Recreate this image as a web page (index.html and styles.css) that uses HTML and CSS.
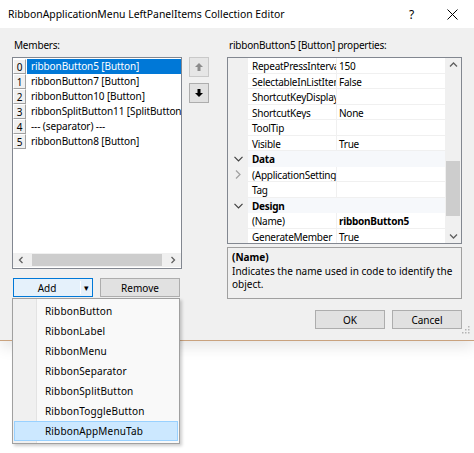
FILE: index.html
```html
<!DOCTYPE html>
<html lang="en">
<head>
    <meta charset="UTF-8">
    <title>RibbonApplicationMenu LeftPanelItems Collection Editor</title>
    <link rel="stylesheet" href="styles.css">
</head>
<body>
    <div class="dialog">
        <div class="titlebar">
            <span class="title">RibbonApplicationMenu LeftPanelItems Collection Editor</span>
            <span class="help">?</span>
            <svg class="close" width="11" height="11" viewBox="0 0 11 11"><path d="M0.5 0.5 L10.5 10.5 M10.5 0.5 L0.5 10.5" stroke="#000" stroke-width="1"/></svg>
        </div>

        <div class="content">
            <div class="left">
                <div class="label">Members:</div>
                <div class="members-row">
                    <div class="members">
                        <div class="items">
                            <div class="item selected"><span class="idx">0</span><span class="name">ribbonButton5 [Button]</span></div>
                            <div class="item"><span class="idx">1</span><span class="name">ribbonButton7 [Button]</span></div>
                            <div class="item"><span class="idx">2</span><span class="name">ribbonButton10 [Button]</span></div>
                            <div class="item"><span class="idx">3</span><span class="name">ribbonSplitButton11 [SplitButton]</span></div>
                            <div class="item"><span class="idx">4</span><span class="name">--- (separator) ---</span></div>
                            <div class="item"><span class="idx">5</span><span class="name">ribbonButton8 [Button]</span></div>
                        </div>
                        <div class="hscroll">
                            <svg width="16" height="14" viewBox="0 0 16 14"><path d="M9.5 4 L6.5 7 L9.5 10" fill="none" stroke="#606060" stroke-width="1.3"/></svg>
                            <div class="hthumb"></div>
                            <svg width="16" height="14" viewBox="0 0 16 14"><path d="M6.5 4 L9.5 7 L6.5 10" fill="none" stroke="#606060" stroke-width="1.3"/></svg>
                        </div>
                    </div>
                    <div class="movers">
                        <div class="mover disabled">
                            <svg width="10" height="10" viewBox="0 0 10 10"><path d="M5 1 L9 5 L6.5 5 L6.5 9 L3.5 9 L3.5 5 L1 5 Z" fill="#8c8c8c"/></svg>
                        </div>
                        <div class="mover">
                            <svg width="10" height="10" viewBox="0 0 10 10"><path d="M5 9 L9 5 L6.5 5 L6.5 1 L3.5 1 L3.5 5 L1 5 Z" fill="#000"/></svg>
                        </div>
                    </div>
                </div>
                <div class="add-row">
                    <div class="btn add"><span class="add-text">Add</span><span class="add-split"></span><span class="add-arrow">&#9662;</span></div>
                    <div class="btn remove">Remove</div>
                </div>
            </div>

            <div class="right">
                <div class="label">ribbonButton5 [Button] properties:</div>
                <div class="grid">
                    <div class="rows">
                        <div class="row"><span class="gut"></span><span class="pname">RepeatPressInterval</span><span class="pval">150</span></div>
                        <div class="row"><span class="gut"></span><span class="pname">SelectableInListItems</span><span class="pval">False</span></div>
                        <div class="row"><span class="gut"></span><span class="pname">ShortcutKeyDisplayString</span><span class="pval"></span></div>
                        <div class="row"><span class="gut"></span><span class="pname">ShortcutKeys</span><span class="pval">None</span></div>
                        <div class="row"><span class="gut"></span><span class="pname">ToolTip</span><span class="pval"></span></div>
                        <div class="row"><span class="gut"></span><span class="pname">Visible</span><span class="pval">True</span></div>
                        <div class="row cat"><span class="gut"><svg width="9" height="6" viewBox="0 0 9 6"><path d="M0.5 0.8 L4.5 4.8 L8.5 0.8" fill="none" stroke="#404040" stroke-width="1.2"/></svg></span><span class="cname">Data</span></div>
                        <div class="row"><span class="gut"><svg width="6" height="9" viewBox="0 0 6 9"><path d="M1 0.5 L5 4.5 L1 8.5" fill="none" stroke="#a0a0a0" stroke-width="1.2"/></svg></span><span class="pname">(ApplicationSettings)</span><span class="pval"></span></div>
                        <div class="row"><span class="gut"></span><span class="pname">Tag</span><span class="pval"></span></div>
                        <div class="row cat"><span class="gut"><svg width="9" height="6" viewBox="0 0 9 6"><path d="M0.5 0.8 L4.5 4.8 L8.5 0.8" fill="none" stroke="#404040" stroke-width="1.2"/></svg></span><span class="cname">Design</span></div>
                        <div class="row"><span class="gut"></span><span class="pname">(Name)</span><span class="pval bold">ribbonButton5</span></div>
                        <div class="row"><span class="gut"></span><span class="pname">GenerateMember</span><span class="pval">True</span></div>
                    </div>
                    <div class="vscroll">
                        <svg width="15" height="14" viewBox="0 0 15 14"><path d="M4 8.5 L7.5 5 L11 8.5" fill="none" stroke="#606060" stroke-width="1.3"/></svg>
                        <div class="vtrack"><div class="vthumb"></div></div>
                        <svg width="15" height="14" viewBox="0 0 15 14"><path d="M4 5.5 L7.5 9 L11 5.5" fill="none" stroke="#606060" stroke-width="1.3"/></svg>
                    </div>
                </div>
                <div class="desc">
                    <div class="desc-title">(Name)</div>
                    <div class="desc-text">Indicates the name used in code to identify the object.</div>
                </div>
                <div class="footer">
                    <div class="btn">OK</div>
                    <div class="btn">Cancel</div>
                </div>
            </div>
        </div>
        <div class="grip">
            <svg width="8" height="8" viewBox="0 0 8 8" fill="#b4b4b4"><rect x="6" y="0" width="1.5" height="1.5"/><rect x="3" y="3" width="1.5" height="1.5"/><rect x="6" y="3" width="1.5" height="1.5"/><rect x="0" y="6" width="1.5" height="1.5"/><rect x="3" y="6" width="1.5" height="1.5"/><rect x="6" y="6" width="1.5" height="1.5"/></svg>
        </div>
    </div>

    <div class="menu">
        <div class="menu-item">RibbonButton</div>
        <div class="menu-item">RibbonLabel</div>
        <div class="menu-item">RibbonMenu</div>
        <div class="menu-item">RibbonSeparator</div>
        <div class="menu-item">RibbonSplitButton</div>
        <div class="menu-item">RibbonToggleButton</div>
        <div class="menu-item hover">RibbonAppMenuTab</div>
    </div>
</body>
</html>
```

FILE: styles.css
```css
body {
    margin: 0;
    width: 474px;
    height: 453px;
    overflow: hidden;
    background-color: #ffffff;
    font-family: "Noto Sans", "Open Sans", sans-serif;
    font-size: 10px;
    color: #000;
    position: relative;
}
.dialog {
    height: 340px;
    background-color: #f0f0f0;
    border-bottom: 1px solid #c9a27e;
    box-shadow: 0 6px 14px rgba(0, 0, 0, 0.1);
    position: relative;
}
.titlebar {
    height: 28px;
    background-color: #ffffff;
    display: flex;
    align-items: center;
    padding-left: 8px;
}
.title {
    font-size: 10.4px;
    flex: 1;
}
.help {
    font-size: 12px;
    width: 38px;
}
.close {
    margin-right: 16px;
}
.content {
    display: flex;
    padding: 10px 0 0 12px;
}
.label {
    height: 19px;
    line-height: 14px;
    padding-left: 2px;
    letter-spacing: -0.2px;
}
.left {
    width: 198px;
}
.members-row {
    display: flex;
}
.members {
    width: 168px;
    height: 210px;
    background-color: #fff;
    border: 1px solid #828790;
    display: flex;
    flex-direction: column;
}
.items {
    flex: 1;
    padding-top: 1px;
    overflow: hidden;
    letter-spacing: -0.1px;
}
.item {
    display: flex;
    height: 15px;
    line-height: 14px;
    white-space: nowrap;
}
.idx {
    width: 11px;
    height: 13px;
    text-align: center;
    background-color: #f0f0f0;
    border-top: 1px solid #fff;
    border-left: 1px solid #fff;
    border-right: 1px solid #a0a0a0;
    border-bottom: 1px solid #a0a0a0;
    flex-shrink: 0;
}
.name {
    padding-left: 4px;
    margin-left: 1px;
    flex: 1;
    overflow: hidden;
}
.selected .name {
    background-color: #0078d7;
    color: #fff;
}
.hscroll {
    height: 14px;
    display: flex;
    align-items: center;
    background-color: #f0f0f0;
    margin-bottom: 1px;
}
.hthumb {
    flex: 1;
    height: 12px;
    background-color: #cdcdcd;
    margin: 0 3px;
}
.movers {
    margin-left: 7px;
    display: flex;
    flex-direction: column;
    gap: 6px;
}
.mover {
    width: 18px;
    height: 18px;
    border: 1px solid #adadad;
    background-color: #e1e1e1;
    display: flex;
    align-items: center;
    justify-content: center;
}
.mover.disabled {
    border-color: #c9c9c9;
    background-color: #e6e6e6;
}
.add-row {
    display: flex;
    gap: 7px;
    margin-top: 9px;
    padding-left: 1px;
}
.btn {
    height: 17px;
    border: 1px solid #adadad;
    background-color: #e1e1e1;
    display: flex;
    align-items: center;
    justify-content: center;
}
.add {
    width: 78px;
    background-color: #e5f1fb;
    border-color: #0078d7;
    justify-content: flex-start;
}
.add-text {
    width: 66px;
    text-align: center;
}
.add-split {
    width: 1px;
    height: 13px;
    background-color: #fff;
}
.add-arrow {
    font-size: 9px;
    width: 11px;
    text-align: center;
}
.remove {
    width: 78px;
}
.right {
    width: 235px;
    margin-left: 17px;
}
.grid {
    height: 185px;
    border: 1px solid #828790;
    background-color: #fff;
    display: flex;
    letter-spacing: -0.25px;
}
.rows {
    flex: 1;
    overflow: hidden;
}
.row {
    display: flex;
    height: 15.5px;
    line-height: 17px;
    white-space: nowrap;
}
.gut {
    width: 20px;
    flex-shrink: 0;
    background-color: #f0f0f0;
    display: flex;
    align-items: center;
    justify-content: center;
    padding-top: 1px;
}
.pname {
    width: 84px;
    padding-left: 4px;
    overflow: hidden;
    text-overflow: clip;
    border-bottom: 1px solid #f0f0f0;
    border-right: 1px solid #f0f0f0;
}
.pval {
    flex: 1;
    padding-left: 2px;
    border-bottom: 1px solid #f0f0f0;
}
.bold, .cname, .desc-title {
    font-weight: bold;
}
.cat {
    background-color: #f6f8fb;
}
.cname {
    padding-left: 4px;
}
.vscroll {
    width: 16px;
    background-color: #f0f0f0;
    display: flex;
    flex-direction: column;
    align-items: center;
}
.vtrack {
    flex: 1;
    width: 100%;
}
.vthumb {
    margin: 89px auto 0;
    width: 14px;
    height: 55px;
    background-color: #cdcdcd;
}
.desc {
    margin-top: 3px;
    height: 45px;
    border: 1px solid #a0a0a0;
    padding: 3px 2px 2px 4px;
    line-height: 13.5px;
}
.footer {
    display: flex;
    justify-content: flex-end;
    gap: 7px;
    margin-top: 11px;
}
.footer .btn {
    width: 68px;
}
.grip {
    position: absolute;
    right: 4px;
    bottom: 3px;
}
.menu {
    position: absolute;
    left: 12px;
    top: 298px;
    width: 166px;
    padding: 2px 0;
    background: linear-gradient(to right, #f0f0f0 23px, #e3e3e3 23px, #e3e3e3 24px, #f9f9f9 24px);
    border: 1px solid #a0a0a0;
    box-shadow: 2px 2px 3px rgba(0, 0, 0, 0.2);
    letter-spacing: 0.15px;
}
.menu-item {
    height: 20px;
    line-height: 20px;
    padding-left: 31px;
    margin: 0 1px;
}
.menu-item.hover {
    background-color: #cce8ff;
    border: 1px solid #99d1ff;
    height: 18px;
    line-height: 18px;
    padding-left: 30px;
}
```
